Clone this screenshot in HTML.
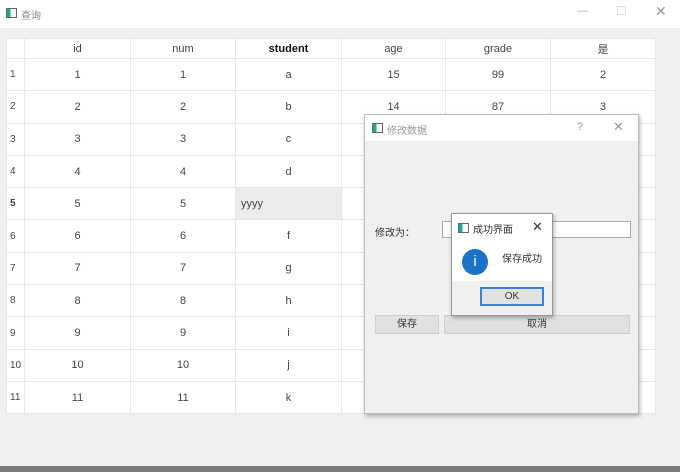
<!DOCTYPE html>
<html><head><meta charset="utf-8"><style>
*{margin:0;padding:0;box-sizing:border-box}
body{width:680px;height:472px;overflow:hidden;background:#f0f0f0;font-family:"Liberation Sans","Noto Sans CJK SC",sans-serif;font-size:11px;color:#333;position:relative}
.abs{position:absolute}
.tb{left:0;top:0;width:680px;height:28px;background:#fff}
.ico{width:11px;height:10px;border:1px solid #666;background:linear-gradient(90deg,#2a8 0 40%,#fff 40%)}
table{border-collapse:collapse;position:absolute;left:6px;top:38px;background:#fff;border:1px solid #ccc}
td{border:1px solid #e6e6e6;text-align:center;color:#444;font-size:11px;padding:0}
td.v{width:18px;text-align:left;padding-left:3px;background:#fff;font-size:10px}
tr.h td{height:20px}
tr.r td{height:32.3px}
.btn{background:#e1e1e1;border:1px solid #cfcfcf;text-align:center;line-height:17px;font-size:10px}
</style></head><body>
<div class="abs tb"></div>
<div class="abs ico" style="left:6px;top:8px"></div>
<div class="abs" style="left:21px;top:7px;color:#888;font-size:10px">查询</div>
<div class="abs" style="left:577px;top:5px;color:#aaa">—</div>
<div class="abs" style="left:617px;top:6px;width:9px;height:9px;border:1px solid #ddd"></div>
<div class="abs" style="left:655px;top:3px;color:#999;font-size:14px">✕</div>
<table>
<tr class="h"><td class="v"></td><td style="width:106px">id</td><td style="width:105px">num</td><td style="width:106px;font-weight:bold;color:#111">student</td><td style="width:104px">age</td><td style="width:105px">grade</td><td style="width:105px">是</td></tr>
<tr class="r"><td class="v">1</td><td>1</td><td>1</td><td>a</td><td>15</td><td>99</td><td>2</td></tr>
<tr class="r"><td class="v">2</td><td>2</td><td>2</td><td>b</td><td>14</td><td>87</td><td>3</td></tr>
<tr class="r"><td class="v">3</td><td>3</td><td>3</td><td>c</td><td></td><td></td><td></td></tr>
<tr class="r"><td class="v">4</td><td>4</td><td>4</td><td>d</td><td></td><td></td><td></td></tr>
<tr class="r"><td class="v" style="font-weight:bold">5</td><td>5</td><td>5</td><td style="background:#ececec;text-align:left;padding-left:5px">yyyy</td><td></td><td></td><td></td></tr>
<tr class="r"><td class="v">6</td><td>6</td><td>6</td><td>f</td><td></td><td></td><td></td></tr>
<tr class="r"><td class="v">7</td><td>7</td><td>7</td><td>g</td><td></td><td></td><td></td></tr>
<tr class="r"><td class="v">8</td><td>8</td><td>8</td><td>h</td><td></td><td></td><td></td></tr>
<tr class="r"><td class="v">9</td><td>9</td><td>9</td><td>i</td><td></td><td></td><td></td></tr>
<tr class="r"><td class="v">10</td><td>10</td><td>10</td><td>j</td><td></td><td></td><td></td></tr>
<tr class="r"><td class="v">11</td><td>11</td><td>11</td><td>k</td><td></td><td></td><td></td></tr>
</table>
<div class="abs" style="left:364px;top:114px;width:275px;height:300px;background:#f0f0f0;border:1px solid #bbb;box-shadow:1px 2px 4px rgba(0,0,0,.3)">
 <div class="abs" style="left:0;top:0;width:273px;height:26px;background:#fff"></div>
 <div class="abs ico" style="left:7px;top:8px"></div>
 <div class="abs" style="left:22px;top:7px;color:#999;font-size:10px">修改数据</div>
 <div class="abs" style="left:212px;top:6px;color:#999">?</div>
 <div class="abs" style="left:248px;top:4px;color:#999;font-size:13px">✕</div>
 <div class="abs" style="left:10px;top:109px;font-size:10px">修改为：</div>
 <div class="abs" style="left:77px;top:106px;width:189px;height:17px;background:#fff;border:1px solid #aaa"></div>
 <div class="abs btn" style="left:10px;top:200px;width:64px;height:19px">保存</div>
 <div class="abs btn" style="left:79px;top:200px;width:186px;height:19px">取消</div>
</div>
<div class="abs" style="left:451px;top:213px;width:102px;height:103px;background:#f0f0f0;border:1px solid #999;box-shadow:1px 2px 4px rgba(0,0,0,.3)">
 <div class="abs" style="left:0;top:0;width:100px;height:67px;background:#fff"></div>
 <div class="abs ico" style="left:6px;top:9px"></div>
 <div class="abs" style="left:21px;top:7px;font-size:10px">成功界面</div>
 <div class="abs" style="left:80px;top:5px;font-size:13px">✕</div>
 <div class="abs" style="left:10px;top:35px;width:26px;height:26px;border-radius:50%;background:#1a73c9;color:#fff;text-align:center;line-height:26px;font-size:15px">i</div>
 <div class="abs" style="left:50px;top:36px;font-size:10px">保存成功</div>
 <div class="abs btn" style="left:28px;top:73px;width:64px;height:19px;border:2px solid #3a7fd0;line-height:15px">OK</div>
</div>
<div class="abs" style="left:0;top:466px;width:680px;height:6px;background:#7a7a7a"></div>
</body></html>
